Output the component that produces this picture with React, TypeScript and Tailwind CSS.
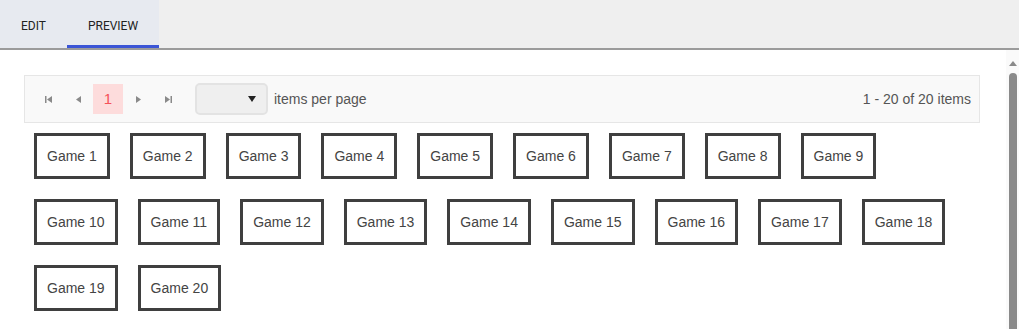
import React from 'react';

const games = Array.from({ length: 20 }, (_, i) => `Game ${i + 1}`);

const PagerIcon: React.FC<{ kind: 'first' | 'prev' | 'next' | 'last' }> = ({ kind }) => {
  const paths: Record<string, React.ReactNode> = {
    first: (
      <>
        <rect x="0" y="0" width="1.5" height="7" />
        <path d="M7 0 L2 3.5 L7 7 Z" />
      </>
    ),
    prev: <path d="M6 0 L1 3.5 L6 7 Z" />,
    next: <path d="M1 0 L6 3.5 L1 7 Z" />,
    last: (
      <>
        <path d="M0 0 L5 3.5 L0 7 Z" />
        <rect x="5.5" y="0" width="1.5" height="7" />
      </>
    ),
  };
  return (
    <svg viewBox="0 0 7 7" className="w-[7px] h-[7px] text-[#8a8a8a]" fill="currentColor" aria-hidden="true">
      {paths[kind]}
    </svg>
  );
};

const Pager: React.FC = () => (
  <div className="flex items-center justify-between h-[48px] bg-[#f9f9f9] border border-[#e6e6e6] pl-[8px] pr-[8px] text-[14px] text-[#555]">
    <div className="flex items-center">
      <span className="w-[30px] h-[30px] flex items-center justify-center"><PagerIcon kind="first" /></span>
      <span className="w-[30px] h-[30px] flex items-center justify-center"><PagerIcon kind="prev" /></span>
      <span className="w-[30px] h-[30px] flex items-center justify-center bg-[#fddcdc] text-[#f5525a] text-[15px]">1</span>
      <span className="w-[30px] h-[30px] flex items-center justify-center"><PagerIcon kind="next" /></span>
      <span className="w-[30px] h-[30px] flex items-center justify-center"><PagerIcon kind="last" /></span>
      <div className="ml-[12px] w-[73px] h-[32px] rounded-[5px] border-2 border-[#e3e3e3] bg-[#efefef] flex items-center justify-end pr-[10px]">
        <svg viewBox="0 0 8 6" className="w-[8px] h-[6px] text-[#222]" fill="currentColor" aria-hidden="true">
          <path d="M0 0 H8 L4 6 Z" />
        </svg>
      </div>
      <span className="ml-[6px]">items per page</span>
    </div>
    <span>1 - 20 of 20 items</span>
  </div>
);

export default function App() {
  return (
    <div className="w-[1019px] h-[329px] bg-white overflow-hidden flex flex-col" style={{ fontFamily: '"Liberation Sans", Arial, sans-serif' }}>
      <div className="flex h-[50px] bg-[#efefef] border-b-2 border-[#9b9b9b] shrink-0">
        <div className="flex bg-[#e7eaf0]" style={{ fontFamily: 'Roboto, "Open Sans", sans-serif' }}>
          <div className="w-[67px] flex items-center justify-center text-[12px] font-normal text-[#222] pt-[3px]">EDIT</div>
          <div className="w-[92px] flex items-center justify-center text-[12px] font-normal text-[#222] border-b-[3px] border-[#3b55d6] pt-[6px]">PREVIEW</div>
        </div>
      </div>
      <div className="flex flex-1 min-h-0">
        <div className="flex-1 pl-[24px] pr-[26px] pt-[25px]">
          <Pager />
          <div className="flex flex-wrap">
            {games.map((g) => (
              <div key={g} className="m-[10px] border-[3px] border-[#3f3f3f] px-[10px] h-[46px] flex items-center text-[14px] text-[#444]">
                {g}
              </div>
            ))}
          </div>
        </div>
        <div className="w-[13px] bg-[#fafafa] flex flex-col items-center pt-[11px]">
          <svg viewBox="0 0 8 5" className="w-[8px] h-[5px] text-[#8a8a8a]" fill="currentColor" aria-hidden="true">
            <path d="M4 0 L8 5 H0 Z" />
          </svg>
          <div className="mt-[7px] w-[8px] flex-1 bg-[#8a8a8a] rounded-t-[4px]" />
        </div>
      </div>
    </div>
  );
}
